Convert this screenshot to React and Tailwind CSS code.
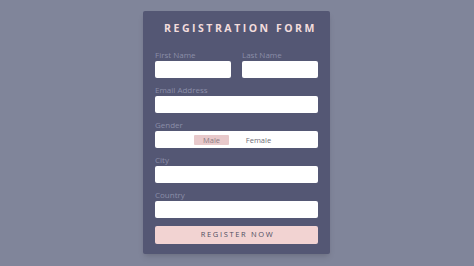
import { useState } from "react";

const Field = ({ label, className = "" }) => (
  <div className={"flex flex-col " + className}>
    <label className="text-[8px] leading-[10px] h-[10px] text-[#8b8ea8] mb-[1px] whitespace-nowrap">
      {label}
    </label>
    <input
      type="text"
      className="h-[17px] w-full min-w-0 bg-white rounded-[2px] outline-none px-1 text-[8px] text-gray-700"
    />
  </div>
);

const App = () => {
  const [gender, setGender] = useState("male");

  return (
    <div
      className="w-[474px] h-[266px] bg-[#80859a] flex justify-center pt-[11px] pr-[1px]"
      style={{ fontFamily: '"Open Sans", "Liberation Sans", sans-serif' }}
    >
      <div className="w-[187px] h-[243px] bg-[#545774] rounded-[2px] shadow-md px-3 pt-[10px]">
        <h2 className="-mx-3 text-[10.5px] leading-[14px] font-bold text-center text-[#f2dcdc] tracking-[0.24em] pl-[8px] whitespace-nowrap">
          REGISTRATION FORM
        </h2>
        <form className="flex flex-col gap-[7px] mt-[15px]">
          <div className="flex gap-[11px]">
            <Field label="First Name" className="flex-1 min-w-0" />
            <Field label="Last Name" className="flex-1 min-w-0" />
          </div>
          <Field label="Email Address" />
          <div className="flex flex-col">
            <label className="text-[8px] leading-[10px] h-[10px] text-[#8b8ea8] mb-[1px]">
              Gender
            </label>
            <div className="h-[17px] bg-white rounded-[2px] flex items-center justify-center gap-[12px] pr-[3px]">
              <button
                type="button"
                onClick={() => setGender("male")}
                className={
                  "w-[35px] h-[10px] rounded-[1px] text-[7.5px] leading-[10px] " +
                  (gender === "male" ? "bg-[#e8c9cb] text-[#8a7c84]" : "text-[#6e6e78]")
                }
              >
                Male
              </button>
              <button
                type="button"
                onClick={() => setGender("female")}
                className={
                  "w-[35px] h-[10px] rounded-[1px] text-[7.5px] leading-[10px] " +
                  (gender === "female" ? "bg-[#e8c9cb] text-[#8a7c84]" : "text-[#6e6e78]")
                }
              >
                Female
              </button>
            </div>
          </div>
          <Field label="City" />
          <Field label="Country" />
          <button
            type="submit"
            className="mt-[1px] h-[18px] bg-[#f2d3d2] rounded-[2px] text-[7.5px] font-medium tracking-[0.22em] text-[#4f4f62] pl-[2px]"
          >
            REGISTER NOW
          </button>
        </form>
      </div>
    </div>
  );
};

export default App;
